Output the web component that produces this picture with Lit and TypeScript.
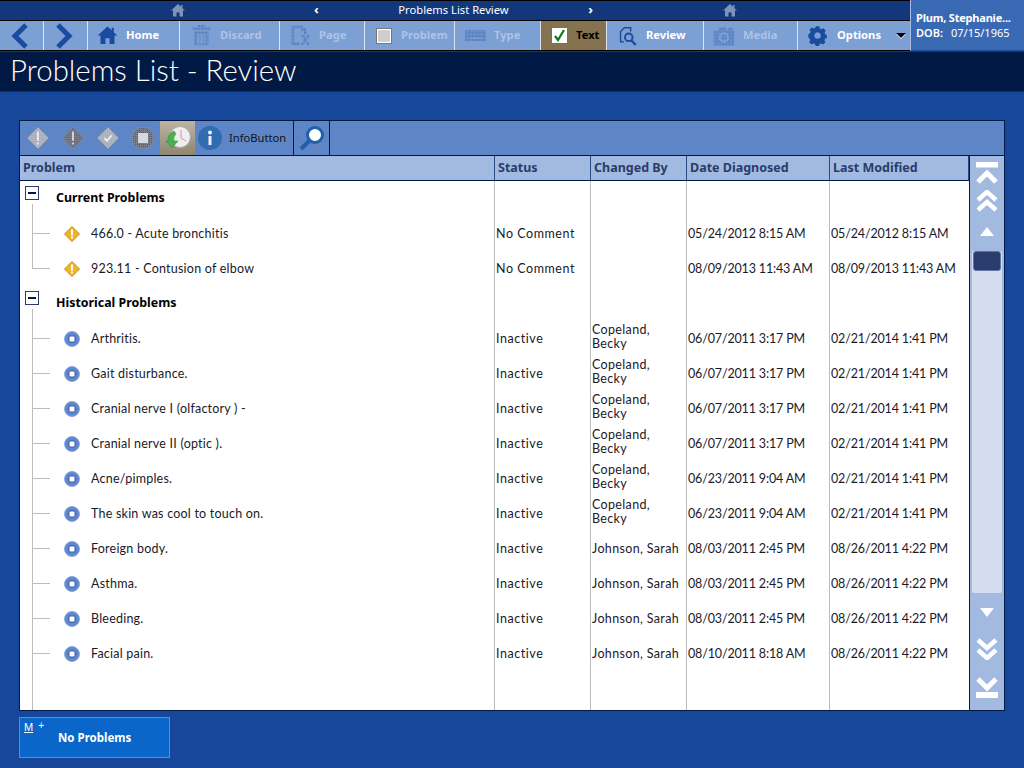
import { LitElement, html, css, svg } from 'lit';
import { customElement } from 'lit/decorators.js';

const dots = svg`<defs><pattern id="dots" width="2" height="2" patternUnits="userSpaceOnUse">
  <rect width="2" height="2" fill="#7c9fd4"/><rect width="1.5" height="1.5" fill="#4f7abf"/></pattern>
  <pattern id="grey" width="2" height="2" patternUnits="userSpaceOnUse">
  <rect width="2" height="2" fill="#b3b9c6"/><rect width="1" height="1" fill="#969eb0"/></pattern>
  <pattern id="dark" width="2" height="2" patternUnits="userSpaceOnUse">
  <rect width="2" height="2" fill="#797e8c"/><rect width="1" height="1" fill="#565a68"/></pattern></defs>`;

const house = 'M15 2 1 15h4v12h7v-8h6v8h7V15h4l-5-4.600V4h-3v3.600z';

const icons: Record<string, any> = {
    home: svg`<path d=${house} fill="#1a4b9e"/>`,
    trash: svg`${dots}<g fill="url(#dots)"><rect x="10" y="0" width="10" height="3"/><rect x="2" y="3" width="26" height="4"/><path d="M5 9h20v20H5zM9 12v15h3V12zm5 0v15h3V12zm5 0v15h2V12z" fill-rule="evenodd"/></g>`,
    page: svg`${dots}<g fill="url(#dots)"><path d="M2 1h16l6 6v7h-4v-5h-4V5H6v20h8v4H2z"/><path d="m15 14 4 0 3 4 3-4h4l-5 7 5 8h-4l-3-5-3 5h-4l5-8z"/></g>`,
    keyboard: svg`${dots}<rect x="0" y="7" width="30" height="16" fill="url(#dots)"/><g fill="#7c9fd4"><rect x="6" y="18" width="18" height="2"/></g>`,
    review: svg`<g fill="none" stroke="#1a4b9e" stroke-width="2.200"><path d="M4 19V8l6-6h10v6M4 19v5h5"/><circle cx="17" cy="17" r="6" stroke-width="3"/><path d="m21 22 7 7" stroke-width="3.500"/></g>`,
    camera: svg`${dots}<path d="M1 7h6l2-4h8l2 4h2V4h6v3h2v21H1zM15 10a7 7 0 1 0 .01 0z" fill="url(#dots)" fill-rule="evenodd"/><circle cx="15" cy="17" r="4" fill="url(#dots)"/>`,
    gear: svg`<path fill="#1a4b9e" fill-rule="evenodd" d="M12 1h6l1 4 3 1.500 3.800-1.800 4 4.300-2 3.500 1 3 3.200 1.500v5.500l-3.400 1.400-1 3 1.800 3.600-4.300 4-3.400-2-3 1.200-1.200 3.300h-6l-1.200-3.300-3-1.200-3.400 2-4.300-4 1.800-3.600-1-3L-2 21v-5.500L1.200 14l1-3-2-3.500 4-4.300L8 5l3-1.500zM15 12a6 6 0 1 0 .01 0z" transform="translate(2 1) scale(.78)"/>`,
};

type Row = { name: string; status: string; by?: string; diag: string; mod: string; last?: boolean };

const current: Row[] = [
    { name: '466.0 - Acute bronchitis', status: 'No Comment', diag: '05/24/2012 8:15 AM', mod: '05/24/2012 8:15 AM' },
    { name: '923.11 - Contusion of elbow', status: 'No Comment', diag: '08/09/2013 11:43 AM', mod: '08/09/2013 11:43 AM', last: true },
];

const cb = 'Copeland, Becky';
const js = 'Johnson, Sarah';
const historical: Row[] = [
    { name: 'Arthritis.', status: 'Inactive', by: cb, diag: '06/07/2011 3:17 PM', mod: '02/21/2014 1:41 PM' },
    { name: 'Gait disturbance.', status: 'Inactive', by: cb, diag: '06/07/2011 3:17 PM', mod: '02/21/2014 1:41 PM' },
    { name: 'Cranial nerve I (olfactory ) -', status: 'Inactive', by: cb, diag: '06/07/2011 3:17 PM', mod: '02/21/2014 1:41 PM' },
    { name: 'Cranial nerve II (optic ).', status: 'Inactive', by: cb, diag: '06/07/2011 3:17 PM', mod: '02/21/2014 1:41 PM' },
    { name: 'Acne/pimples.', status: 'Inactive', by: cb, diag: '06/23/2011 9:04 AM', mod: '02/21/2014 1:41 PM' },
    { name: 'The skin was cool to touch on.', status: 'Inactive', by: cb, diag: '06/23/2011 9:04 AM', mod: '02/21/2014 1:41 PM' },
    { name: 'Foreign body.', status: 'Inactive', by: js, diag: '08/03/2011 2:45 PM', mod: '08/26/2011 4:22 PM' },
    { name: 'Asthma.', status: 'Inactive', by: js, diag: '08/03/2011 2:45 PM', mod: '08/26/2011 4:22 PM' },
    { name: 'Bleeding.', status: 'Inactive', by: js, diag: '08/03/2011 2:45 PM', mod: '08/26/2011 4:22 PM' },
    { name: 'Facial pain.', status: 'Inactive', by: js, diag: '08/10/2011 8:18 AM', mod: '08/26/2011 4:22 PM' },
];

@customElement('app-root')
export class AppRoot extends LitElement {

    static styles = css`
        :host {
            background: #17479a;
            display: block;
            font-family: "Noto Sans", sans-serif;
            height: 768px;
            overflow: hidden;
            width: 1024px;
        }

        .top {
            display: grid;
            grid-template-columns: 910px 114px;
            height: 51px;
        }

        .top-left {
            display: flex;
            flex-direction: column;
        }

        .crumbs {
            align-items: center;
            background: #12377b;
            border-top: 1px solid #000;
            color: #fff;
            display: grid;
            font-size: 11.200px;
            grid-template-columns: 356px 194px 360px;
            height: 19px;
        }

        .crumbs .mid {
            display: flex;
            justify-content: space-between;
        }

        .crumbs .mid span { margin-bottom: 2px; }

        .crumbs .mid b {
            font-size: 13px;
            line-height: 15px;
        }

        .crumbs .home {
            display: flex;
            justify-content: center;
        }

        .nav {
            background: #7c9fd4;
            border-bottom: 1px solid #000;
            border-top: 1px solid #000;
            display: flex;
            height: 29px;
        }

        .btn {
            align-items: center;
            border-right: 1px solid #d8e4f6;
            box-sizing: border-box;
            color: #fff;
            display: flex;
            flex: none;
            font-size: 11.200px;
            font-weight: 700;
            gap: 8px;
            height: 29px;
            padding-left: 8px;
        }

        .btn span { margin-bottom: 2px; }

        .btn.off { color: #aec3e6; }

        .btn.on {
            background: #85724f;
            color: #000;
        }

        .btn svg { flex: none; }

        .caret {
            border-left: 5px solid transparent;
            border-right: 5px solid transparent;
            border-top: 5px solid #000;
            filter: drop-shadow(0 1px 0 #fff);
            height: 0;
            margin-left: 7px;
            width: 0;
        }

        .check {
            background: #fff;
            border: 1px solid #3a78d0;
            box-sizing: border-box;
            flex: none;
            height: 17px;
            width: 17px;
        }

        .box {
            background: #cfcfcf;
            border: 1px solid #fff;
            box-shadow: 0 0 0 1px #777;
            box-sizing: border-box;
            flex: none;
            height: 14px;
            margin: 0 2px;
            width: 14px;
        }

        .patient {
            background: #3a69b4;
            border-bottom: 1px solid #1a4b9e;
            border-left: 1px solid #a9c0e4;
            box-sizing: border-box;
            color: #fff;
            font-size: 11px;
            font-weight: 700;
            line-height: 14px;
            padding: 11px 0 0 5px;
        }

        .patient .name { letter-spacing: -.2px; }

        .patient .dob {
            display: grid;
            font-weight: 400;
            grid-template-columns: 35px 1fr;
            margin-top: 1px;
        }

        .patient .dob b { font-weight: 600; }

        .title {
            background: #001a45;
            border-bottom: 1px solid #0e2f6d;
            border-top: 1px solid #0e3a85;
            box-sizing: border-box;
            color: #fff;
            font-family: "Lato", sans-serif;
            font-size: 29.400px;
            font-weight: 300;
            height: 41px;
            line-height: 36px;
            padding-left: 10px;
        }

        .panel {
            border: 1px solid #001a45;
            box-sizing: border-box;
            display: flex;
            flex-direction: column;
            height: 591px;
            margin: 28px 19px 0;
            width: 986px;
        }

        .tools {
            background: #5e86c6;
            border-bottom: 1px solid #001a45;
            display: flex;
            flex: none;
            height: 34px;
        }

        .tool {
            align-items: center;
            display: flex;
            flex: none;
            font-size: 11.200px;
            height: 34px;
            justify-content: center;
            width: 35px;
        }

        .tool.on { background: linear-gradient(#bdb5a3, #8f8670); }

        .tool.info {
            border-right: 1px solid #001a45;
            box-sizing: border-box;
            color: #111;
            gap: 7px;
            justify-content: flex-start;
            padding-left: 3px;
            width: 99px;
        }

        .tool.info span { margin-bottom: 2px; }

        .tool.find { border-right: 1px solid #001a45; }

        .body {
            display: grid;
            flex: 1;
            grid-template-columns: 1fr 35px;
            min-height: 0;
        }

        .list {
            background: #fff;
            display: flex;
            flex-direction: column;
        }

        .row {
            display: grid;
            flex: none;
            grid-template-columns: 475px 96px 96px 143px 139px;
            height: 35px;
        }

        .row.head {
            background: #a2badf;
            border-bottom: 1px solid #001a45;
            box-sizing: border-box;
            color: #2a3b6c;
            font-size: 12.500px;
            font-weight: 700;
            height: 25px;
        }

        .row.fill {
            flex: 1;
            height: auto;
        }

        .cell {
            align-items: center;
            border-right: 1px solid #bdbdbd;
            color: #1a1a2a;
            display: flex;
            font-family: "Lato", sans-serif;
            font-size: 12.500px;
            letter-spacing: .55px;
            line-height: 14px;
            min-width: 0;
            overflow: hidden;
            padding-left: 1px;
            white-space: nowrap;
        }

        .cell:last-child { border-right: none; }

        .cell.wrap {
            letter-spacing: .35px;
            padding-bottom: 4px;
            white-space: normal;
        }

        .cell.by { letter-spacing: .35px; }

        .cell.date { letter-spacing: -.15px; }

        .head .cell {
            border-right: 1px solid #2a4a85;
            color: inherit;
            font: inherit;
            letter-spacing: 0;
            padding-bottom: 2px;
            padding-left: 3px;
        }

        .cell.name {
            letter-spacing: .22px;
            padding-left: 0;
            position: relative;
        }

        .cell.name span { margin-left: 11px; }

        .cell.group {
            color: #000;
            font-family: "Noto Sans", sans-serif;
            font-size: 12.400px;
            font-weight: 700;
            letter-spacing: 0;
            padding-left: 5px;
        }

        .cell.group span {
            margin-bottom: 2px;
            margin-left: 17px;
        }

        .expander {
            align-items: center;
            align-self: flex-start;
            border: 1px solid #2a3b6c;
            box-sizing: border-box;
            display: flex;
            flex: none;
            height: 14px;
            justify-content: center;
            margin-top: 5px;
            width: 14px;
        }

        .expander::after {
            background: #001a45;
            content: '';
            height: 2px;
            width: 8px;
        }

        .vline {
            background: #bdbdbd;
            bottom: 0;
            left: 12px;
            position: absolute;
            top: 0;
            width: 1px;
        }

        .vline.first { top: 23px; }
        .vline.end { bottom: 17px; }

        .hline {
            background: #bdbdbd;
            flex: none;
            height: 1px;
            margin-left: 12px;
            width: 18px;
        }

        .badge {
            flex: none;
            margin-left: 14px;
        }

        .scroll {
            align-items: center;
            background: #a2badf;
            border-left: 1px solid #001a45;
            display: flex;
            flex-direction: column;
        }

        .scroll svg { flex: none; }

        .up1 { margin-top: 6px; }
        .up2 { margin-top: 6px; }
        .up3 { margin-top: 15px; }
        .down2 { margin-top: 21px; }
        .down1 { margin-top: 17px; }

        .track {
            background: #d5dcef;
            border-radius: 2px;
            box-sizing: border-box;
            display: flex;
            flex: 1;
            flex-direction: column;
            margin: 15px 0;
            width: 30px;
        }

        .thumb {
            background: #2a3b6c;
            border: 1px solid #6075a5;
            border-radius: 3px;
            box-sizing: border-box;
            height: 20px;
            margin: 0 1px;
        }

        .scroll-end {
            flex: none;
            height: 12px;
        }

        .foot {
            align-items: center;
            background: #0a66c8;
            border: 1px solid #4a90e8;
            box-sizing: border-box;
            color: #fff;
            display: flex;
            font-size: 11.500px;
            font-weight: 700;
            height: 41px;
            margin: 6px 0 0 19px;
            padding-bottom: 1px;
            padding-left: 38px;
            position: relative;
            width: 151px;
        }

        .mark {
            display: flex;
            font-family: "Liberation Sans", sans-serif;
            font-size: 11px;
            font-weight: 400;
            gap: 5px;
            left: 4px;
            line-height: 11px;
            position: absolute;
            top: 4px;
        }

        .mark i {
            font-size: 10px;
            font-style: normal;
            line-height: 8px;
        }
    `;

    private icon(name: string, w = 30, h = 30) {
        return html`<svg width=${w} height=${h} viewBox="0 0 30 30">${icons[name]}</svg>`;
    }

    private navButtons() {
        return html`
            <div class="btn" style="width:44px;padding-left:9px">
                <svg width="22" height="26" viewBox="0 0 22 26"><path d="M17 2 6 13l11 11" fill="none" stroke="#1a4b9e" stroke-width="5"/></svg>
            </div>
            <div class="btn" style="width:44px;padding-left:9px">
                <svg width="22" height="26" viewBox="0 0 22 26"><path d="m5 2 11 11L5 24" fill="none" stroke="#1a4b9e" stroke-width="5"/></svg>
            </div>
            <div class="btn" style="width:92px;padding-left:9px">${this.icon('home', 21, 21)}<span>Home</span></div>
            <div class="btn off" style="width:100px;padding-left:11px">${this.icon('trash', 21, 21)}<span>Discard</span></div>
            <div class="btn off" style="width:85px;padding-left:10px">${this.icon('page', 21, 21)}<span>Page</span></div>
            <div class="btn off" style="width:90px;padding-left:10px"><div class="box"></div><span>Problem</span></div>
            <div class="btn off" style="width:86px;padding-left:10px">${this.icon('keyboard', 21, 21)}<span>Type</span></div>
            <div class="btn on" style="width:66px;padding-left:10px">
                <div class="check"><svg width="15" height="15" viewBox="0 0 15 15" style="display:block"><path d="m3 8 3 4 6-10" fill="none" stroke="#0a7d1a" stroke-width="2.200"/></svg></div>
                <span>Text</span>
            </div>
            <div class="btn" style="width:97px;padding-left:11px">${this.icon('review', 19, 20)}<span style="margin-left:1px">Review</span></div>
            <div class="btn off" style="width:94px;padding-left:9px">${this.icon('camera', 22, 22)}<span>Media</span></div>
            <div class="btn" style="width:113px;padding-left:10px;border-right:none">${this.icon('gear', 21, 21)}<span>Options</span><div class="caret"></div></div>
        `;
    }

    private toolButtons() {
        const diamond = (fill: string, mark: any) => html`
            <svg width="24" height="24" viewBox="0 0 26 26">
                ${dots}<path d="M13 1 25 13 13 25 1 13z" fill=${fill} stroke="#7d8aa6"/>${mark}
            </svg>`;
        return html`
            <div class="tool">${diamond('url(#grey)', svg`<rect x="12" y="6" width="2" height="10" fill="#eee"/><rect x="12" y="18" width="2" height="2" fill="#eee"/>`)}</div>
            <div class="tool">${diamond('url(#dark)', svg`<rect x="12" y="6" width="2" height="10" fill="#ddd"/><rect x="12" y="18" width="2" height="2" fill="#ddd"/>`)}</div>
            <div class="tool">${diamond('url(#grey)', svg`<path d="m9 13 3 3 5-6" fill="none" stroke="#eee" stroke-width="2"/>`)}</div>
            <div class="tool">
                <svg width="24" height="24" viewBox="0 0 24 24">${dots}<circle cx="12" cy="12" r="11" fill="url(#dark)" stroke="#7d8aa6"/><rect x="7" y="7" width="10" height="10" fill="#d5d8e0"/></svg>
            </div>
            <div class="tool on">
                <svg width="26" height="26" viewBox="0 0 26 26">
                    <circle cx="15" cy="12" r="10.500" fill="#eee" stroke="#aaa"/>
                    <path d="M16 5v8l5 3" fill="none" stroke="#c99" stroke-width="1"/>
                    <path d="M9 3a10 10 0 0 0-6 10l-2 0 6 7 6-7h-4a7 7 0 0 1 2-7z" fill="#49b04d" stroke="#2e8a36" stroke-width=".5" transform="translate(0 3)"/>
                </svg>
            </div>
            <div class="tool info">
                <svg width="24" height="24" viewBox="0 0 24 24"><circle cx="12" cy="12" r="12" fill="#2f6cb0"/><rect x="10.500" y="10" width="3" height="9" fill="#eef"/><circle cx="12" cy="6.500" r="2" fill="#eef"/></svg>
                <span>InfoButton</span>
            </div>
            <div class="tool find">
                <svg width="26" height="26" viewBox="0 0 26 26"><circle cx="16" cy="10" r="7.500" fill="#fff" stroke="#1f5fae" stroke-width="3"/><path d="m10 16-8 8" stroke="#1f5fae" stroke-width="4"/></svg>
            </div>
        `;
    }

    private rowTemplate(r: Row, isCurrent: boolean) {
        const badge = isCurrent
            ? html`<svg class="badge" width="16" height="16" viewBox="0 0 16 16"><path d="M8 .5 15.500 8 8 15.500.5 8z" fill="#f0b429" stroke="#c98a14"/><rect x="7" y="3.500" width="2" height="6" fill="#fff"/><rect x="7" y="10.500" width="2" height="2" fill="#fff"/></svg>`
            : html`<svg class="badge" width="16" height="16" viewBox="0 0 16 16"><circle cx="8" cy="8" r="7.500" fill="#5f87d0" stroke="#8fa9dc"/><rect x="5" y="5" width="6" height="6" rx="1" fill="#fff" stroke="#3a5a9e"/></svg>`;
        return html`
            <div class="row item">
                <div class="cell name">
                    <div class="vline ${r.last ? 'end' : ''}"></div>
                    <div class="hline"></div>
                    ${badge}
                    <span>${r.name}</span>
                </div>
                <div class="cell">${r.status}</div>
                <div class="cell ${r.by === cb ? 'wrap' : 'by'}">${r.by ?? ''}</div>
                <div class="cell date">${r.diag}</div>
                <div class="cell date">${r.mod}</div>
            </div>
        `;
    }

    private groupRow(label: string) {
        return html`
            <div class="row">
                <div class="cell name group">
                    <div class="vline first"></div>
                    <div class="expander"></div>
                    <span>${label}</span>
                </div>
                <div class="cell"></div>
                <div class="cell"></div>
                <div class="cell"></div>
                <div class="cell"></div>
            </div>
        `;
    }

    render() {
        const crumbHome = html`<svg width="16" height="15" viewBox="0 0 30 30">${svg`<path d=${house} fill="#7e93b8"/>`}</svg>`;
        return html`
            <div class="top">
                <div class="top-left">
                    <div class="crumbs">
                        <div class="home">${crumbHome}</div>
                        <div class="mid">
                            <b style="margin-left:-42px">‹</b>
                            <span>Problems List Review</span>
                            <b style="margin-right:-43px">›</b>
                        </div>
                        <div class="home">${crumbHome}</div>
                    </div>
                    <div class="nav">${this.navButtons()}</div>
                </div>
                <div class="patient">
                    <div class="name">Plum, Stephanie...</div>
                    <div class="dob"><b>DOB:</b><span>07/15/1965</span></div>
                </div>
            </div>
            <div class="title">Problems List - Review</div>
            <div class="panel">
                <div class="tools">${this.toolButtons()}</div>
                <div class="body">
                    <div class="list">
                        <div class="row head">
                            <div class="cell">Problem</div>
                            <div class="cell">Status</div>
                            <div class="cell">Changed By</div>
                            <div class="cell">Date Diagnosed</div>
                            <div class="cell">Last Modified</div>
                        </div>
                        ${this.groupRow('Current Problems')}
                        ${current.map((r) => this.rowTemplate(r, true))}
                        ${this.groupRow('Historical Problems')}
                        ${historical.map((r) => this.rowTemplate(r, false))}
                        <div class="row fill">
                            <div class="cell name"><div class="vline"></div></div>
                            <div class="cell"></div>
                            <div class="cell"></div>
                            <div class="cell"></div>
                            <div class="cell"></div>
                        </div>
                    </div>
                    <div class="scroll">
                        <svg class="up1" width="24" height="22" viewBox="0 0 24 22"><rect x="1" y="0" width="22" height="5.500" fill="#fff"/><path d="M3 20 12 11l9 9" fill="none" stroke="#fff" stroke-width="5"/></svg>
                        <svg class="up2" width="22" height="22" viewBox="0 0 22 22"><path d="m2 10 9-8 9 8M2 20l9-8 9 8" fill="none" stroke="#fff" stroke-width="4.500"/></svg>
                        <svg class="up3" width="14" height="9" viewBox="0 0 14 9"><path d="M7 0 14 9H0z" fill="#fff"/></svg>
                        <div class="track"><div class="thumb"></div></div>
                        <svg width="14" height="9" viewBox="0 0 14 9"><path d="M0 0H14L7 9z" fill="#fff"/></svg>
                        <svg class="down2" width="22" height="22" viewBox="0 0 22 22"><path d="m2 2 9 8 9-8M2 12l9 8 9-8" fill="none" stroke="#fff" stroke-width="4.500"/></svg>
                        <svg class="down1" width="24" height="21" viewBox="0 0 24 21"><path d="m3 2 9 9 9-9" fill="none" stroke="#fff" stroke-width="5"/><rect x="1" y="15" width="22" height="6" fill="#fff"/></svg>
                        <div class="scroll-end"></div>
                    </div>
                </div>
            </div>
            <div class="foot">
                <div class="mark"><u>M</u><i>+</i></div>
                No Problems
            </div>
        `;
    }
}
